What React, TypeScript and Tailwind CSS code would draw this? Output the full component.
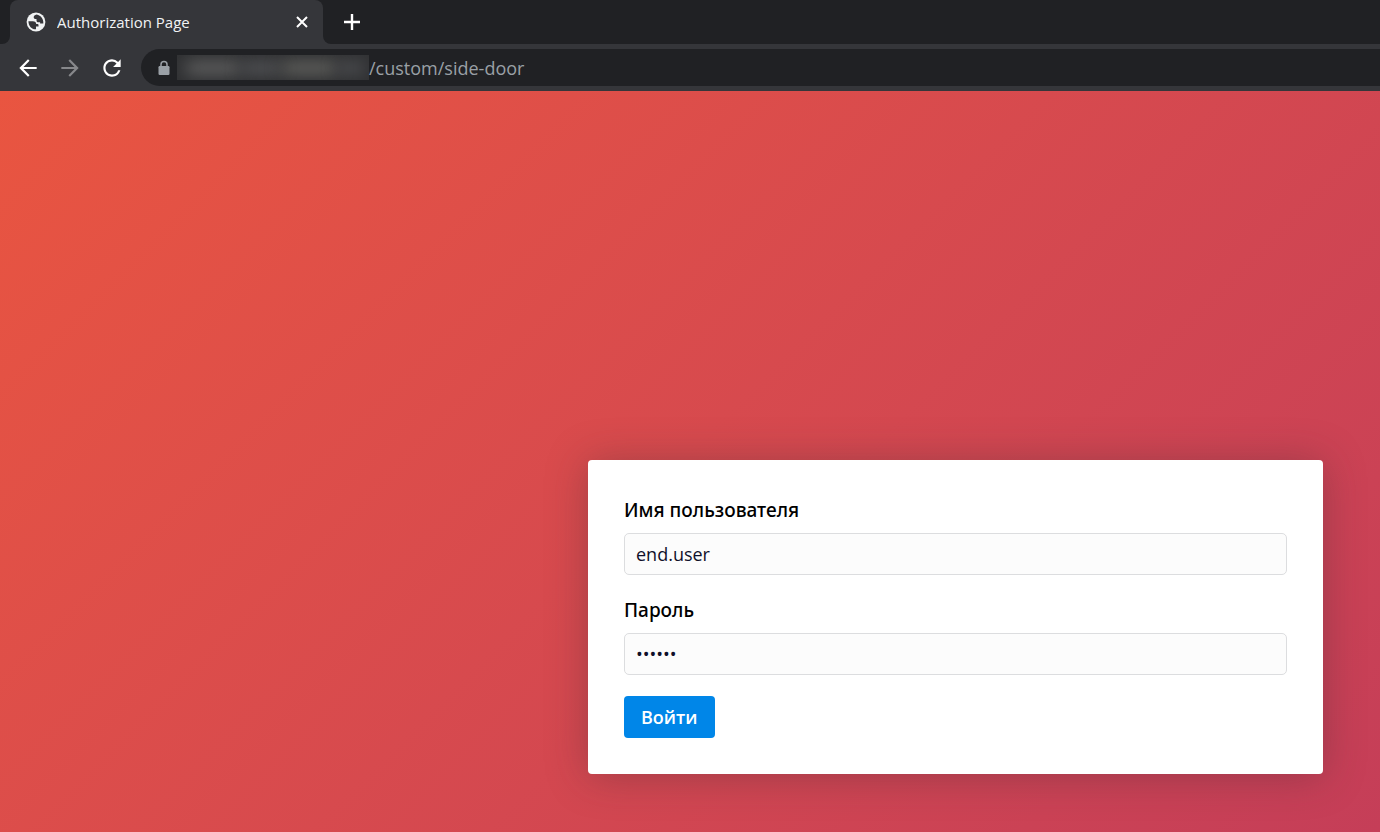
import { useState } from 'react'
import type { FormEvent } from 'react'
import { MdArrowBack, MdArrowForward, MdRefresh } from 'react-icons/md'

function GlobeIcon() {
  return (
    <svg viewBox="0 0 20 20" className="size-5 shrink-0" aria-hidden="true">
      <circle cx="10" cy="10" r="9.4" fill="#f1f3f4" />
      <g fill="#35363a">
        <path d="M2.4 9.2h4.4c2.4 0 3.4 1.2 3.4 2.8h1.4c.6 0 .9.4.9 1v1.6H10v2.6c-3.8.4-7.4-2.6-7.6-8z" />
        <path d="M10.6 2.6c-1.8.4-2.9 1.4-2.9 2.6 0 1.4 1 1.8 2.8 1.8v1.4c0 1.2.8 1.9 2.2 1.9h1.4v1.3h3.2c.5-4.2-2.3-8.2-6.7-9z" />
      </g>
    </svg>
  )
}

function TabStrip() {
  return (
    <div className="flex h-11 items-stretch bg-[#202124]">
      {/* left foot of the tab */}
      <div className="w-[10px] bg-[#35363a]">
        <div className="h-full rounded-br-lg bg-[#202124]" />
      </div>
      <div className="flex w-[313px] items-center rounded-t-lg bg-[#35363a] pr-[11px] pl-4">
        <GlobeIcon />
        <span className="ml-[11px] flex-1 truncate text-[15px] text-[#f1f3f4]">Authorization Page</span>
        <button type="button" aria-label="Close tab" className="flex size-5 items-center justify-center text-white">
          <svg viewBox="0 0 12 12" className="size-3" fill="none" stroke="currentColor" strokeWidth="2">
            <path d="M1 1l10 10M11 1 1 11" />
          </svg>
        </button>
      </div>
      <div className="flex-1 bg-[#35363a]">
        <div className="flex h-full items-center rounded-bl-lg bg-[#202124] pl-[17px]">
          <button type="button" aria-label="New tab" className="flex size-6 items-center justify-center text-white">
            <svg viewBox="0 0 16 16" className="size-4" fill="none" stroke="currentColor" strokeWidth="2.4">
              <path d="M8 0v16M0 8h16" />
            </svg>
          </button>
        </div>
      </div>
    </div>
  )
}

function Toolbar() {
  return (
    <div className="flex h-[47px] items-center bg-[#35363a] pl-[15px]">
      <div className="flex items-center gap-4 text-white">
        <button type="button" aria-label="Back">
          <MdArrowBack className="size-[26px]" />
        </button>
        <button type="button" aria-label="Forward" className="text-[#87888b]">
          <MdArrowForward className="size-[26px]" />
        </button>
        <button type="button" aria-label="Reload">
          <MdRefresh className="size-[26px]" />
        </button>
      </div>
      <div className="ml-4 flex h-[37px] flex-1 items-center rounded-l-full bg-[#202124] pl-[14px]">
        <svg viewBox="0 0 18 18" className="size-[18px]" aria-hidden="true">
          <path d="M6 8V5.6a3 3 0 0 1 6 0V8" fill="none" stroke="#9aa0a6" strokeWidth="1.5" />
          <rect x="3.5" y="7" width="11" height="9" rx="1.2" fill="#9aa0a6" />
        </svg>
        {/* hidden host name */}
        <div className="ml-1 flex h-[25px] w-48 items-center overflow-hidden bg-[#303133]">
          <div className="ml-2 h-3 w-14 rounded-full bg-[#666666] blur-sm" />
          <div className="h-3 w-10 rounded-full bg-[#56575a] blur-sm" />
          <div className="h-3 w-14 rounded-full bg-[#686864] blur-sm" />
          <div className="h-3 w-7 rounded-full bg-[#505154] blur-sm" />
        </div>
        <span className="text-lg text-[#9aa0a6]">/custom/side-door</span>
      </div>
    </div>
  )
}

const labelClass = "block font-['Noto_Sans','Open_Sans',sans-serif] text-[19px]/[29px] font-medium text-black"

const inputClass =
  'mt-2 mb-[21px] h-[42px] w-full rounded-[5px] border border-[#dcdddf] bg-[#fcfcfc] px-[11px] text-lg text-[#10102a] outline-none'

function LoginForm() {
  const [username, setUsername] = useState('end.user')
  const [password, setPassword] = useState('secret')

  const handleSubmit = (e: FormEvent) => {
    e.preventDefault()
  }

  return (
    <form
      onSubmit={handleSubmit}
      className="w-full max-w-[735px] rounded bg-white p-9 shadow-[0_2px_40px_rgba(60,40,50,0.34)]"
    >
      <label htmlFor="username" className={labelClass}>
        Имя пользователя
      </label>
      <input
        id="username"
        type="text"
        value={username}
        onChange={(e) => setUsername(e.target.value)}
        className={inputClass}
      />
      <label htmlFor="password" className={labelClass}>
        Пароль
      </label>
      <input
        id="password"
        type="password"
        value={password}
        onChange={(e) => setPassword(e.target.value)}
        className={inputClass}
      />
      <button
        type="submit"
        className="block h-[42px] rounded bg-[#0086e8] px-[17px] text-lg font-semibold text-white hover:bg-[#0079d2]"
      >
        Войти
      </button>
    </form>
  )
}

export default function App() {
  return (
    <div className="flex min-h-screen flex-col font-['Open_Sans','Noto_Sans',sans-serif]">
      <header>
        <TabStrip />
        <Toolbar />
      </header>
      <main className="flex flex-1 items-end justify-end bg-linear-135 from-[#e95540] to-[#c53e58] px-[57px] py-[58px]">
        <LoginForm />
      </main>
    </div>
  )
}
